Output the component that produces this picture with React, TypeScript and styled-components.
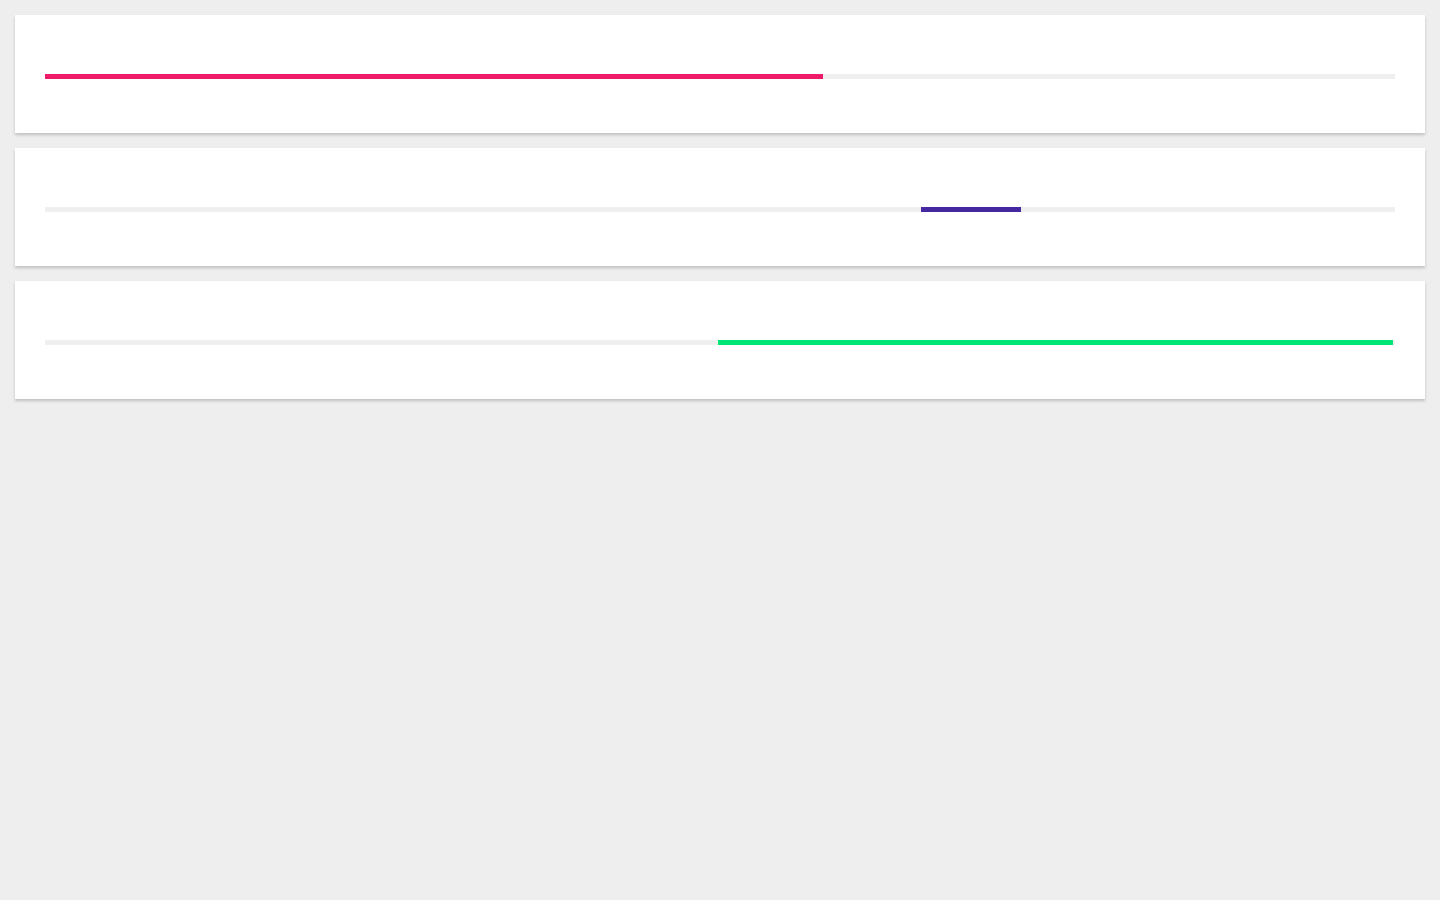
import React from 'react'
import styled, { createGlobalStyle } from 'styled-components';

const GlobalStyle = createGlobalStyle`
    html, body {
        margin: 0;
        background: #eeeeee;
        font-family: Roboto, "Liberation Sans", sans-serif;
    }
`;

const Page = styled.div`
    display: flex;
    flex-direction: column;
    gap: 15px;
    padding: 15px;
`;

const Card = styled.div`
    background: white;
    height: 118px;
    box-sizing: border-box;
    padding: 59px 30px 0 30px;
    box-shadow: 0 2px 3px rgba(0, 0, 0, 0.2);
`;

const Track = styled.div`
    position: relative;
    height: 5px;
    background: #efefef;
`;

interface BarProps {
    color: string;
}
const Bar = styled.div<BarProps>`
    position: absolute;
    top: 0;
    bottom: 0;
    background: ${props => props.color};
`;

const bars = [
    { color: '#f01b68', left: 0, width: 778 },
    { color: '#4527a0', left: 876, width: 100 },
    { color: '#00e676', left: 673, width: 675 },
];

const App = () => {
    return (
        <>
            <GlobalStyle />
            <Page>
                {bars.map((b, i) => (
                    <Card key={i}>
                        <Track>
                            <Bar color={b.color} style={{ left: b.left, width: b.width }} />
                        </Track>
                    </Card>
                ))}
            </Page>
        </>
    )
}

export default App;
